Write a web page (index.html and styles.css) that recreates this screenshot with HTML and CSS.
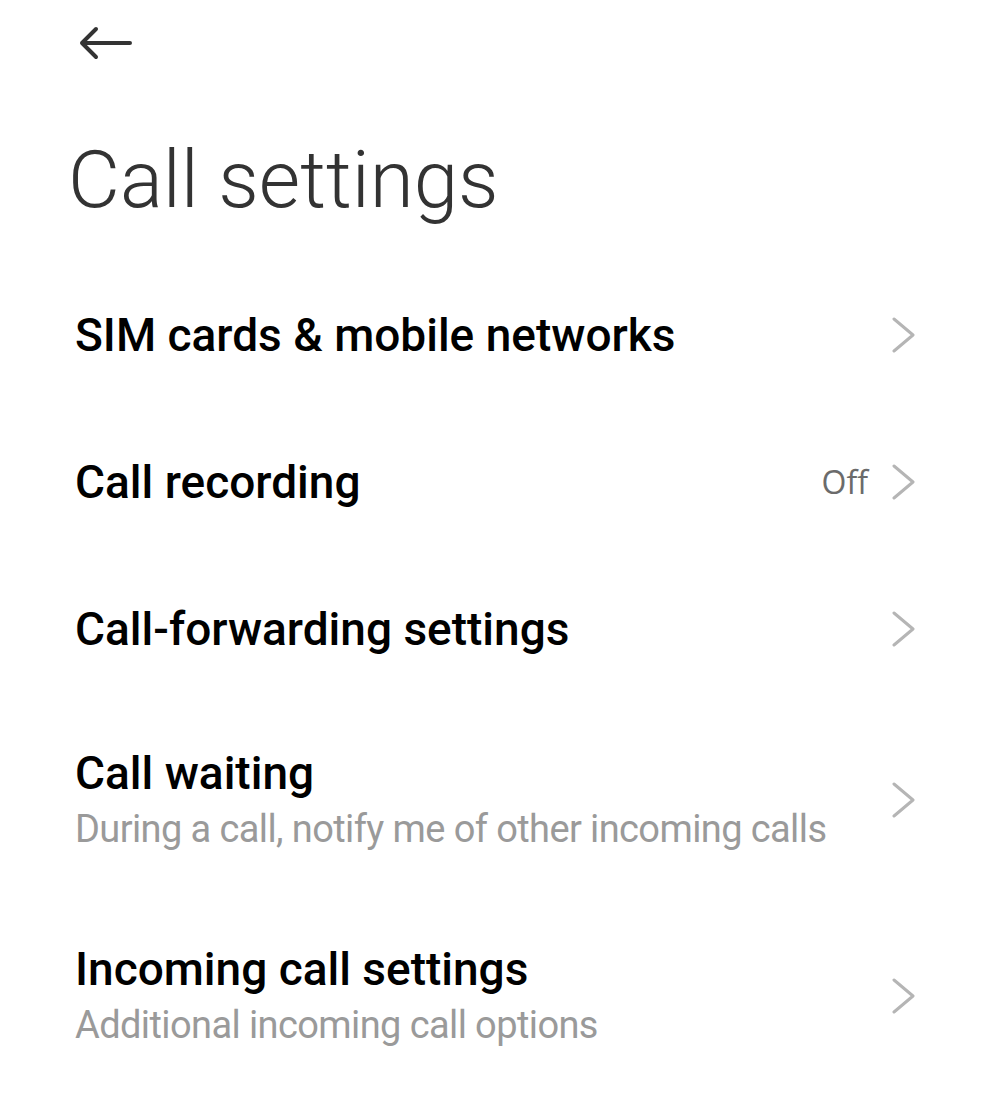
FILE: index.html
```html
<!DOCTYPE html>
<html>
<head>
    <title>Call settings</title>
    <link rel="stylesheet" href="styles.css">
</head>
<body>
    <div class="topbar">
        <button class="back-btn">
            <svg width="56" height="34" viewBox="0 0 56 34">
                <path d="M52 17H4M18 3L4 17l14 14" fill="none" stroke="#333" stroke-width="4" stroke-linecap="round" stroke-linejoin="round"/>
            </svg>
        </button>
    </div>
    <h1 class="page-title">Call settings</h1>

    <div class="settings-list">
        <div class="item">
            <div class="item-text">
                <div class="item-title">SIM cards &amp; mobile networks</div>
            </div>
            <svg class="chevron" width="24" height="36" viewBox="0 0 24 36"><path d="M2 2l19 16L2 34"/></svg>
        </div>
        <div class="item">
            <div class="item-text">
                <div class="item-title">Call recording</div>
            </div>
            <span class="item-value">Off</span>
            <svg class="chevron" width="24" height="36" viewBox="0 0 24 36"><path d="M2 2l19 16L2 34"/></svg>
        </div>
        <div class="item">
            <div class="item-text">
                <div class="item-title">Call-forwarding settings</div>
            </div>
            <svg class="chevron" width="24" height="36" viewBox="0 0 24 36"><path d="M2 2l19 16L2 34"/></svg>
        </div>
        <div class="item two-line">
            <div class="item-text">
                <div class="item-title">Call waiting</div>
                <div class="item-sub">During a call, notify me of other incoming calls</div>
            </div>
            <svg class="chevron" width="24" height="36" viewBox="0 0 24 36"><path d="M2 2l19 16L2 34"/></svg>
        </div>
        <div class="item two-line">
            <div class="item-text">
                <div class="item-title">Incoming call settings</div>
                <div class="item-sub">Additional incoming call options</div>
            </div>
            <svg class="chevron" width="24" height="36" viewBox="0 0 24 36"><path d="M2 2l19 16L2 34"/></svg>
        </div>
    </div>
</body>
</html>
```

FILE: styles.css
```css
body {
    margin: 0;
    background: #fff;
    font-family: Roboto, "Noto Sans", sans-serif;
    color: #000;
}

.topbar {
    height: 86px;
    display: flex;
    align-items: center;
    padding-left: 78px;
}

.back-btn {
    background: none;
    border: none;
    padding: 0;
    display: flex;
    margin-top: -1px;
}

.page-title {
    margin: 0;
    padding-left: 68px;
    font-size: 80px;
    font-weight: 300;
    color: #333;
    line-height: 96px;
    margin-top: 46px;
}

.settings-list {
    margin-top: 33px;
}

.item {
    display: flex;
    align-items: center;
    padding: 0 74px 0 75px;
    height: 147px;
}

.item.two-line {
    height: 196px;
}

.item-text {
    flex: 1;
}

.item-title {
    font-size: 46px;
    font-weight: 500;
    line-height: 56px;
}

.item-sub {
    font-size: 38px;
    letter-spacing: -0.6px;
    color: #9a9a9a;
    line-height: 52px;
    margin-top: 2px;
}

.item-value {
    font-family: "Open Sans", "Noto Sans", sans-serif;
    font-size: 32px;
    color: #6b6b6b;
    margin-right: 24px;
}

.chevron {
    fill: none;
    stroke: #b5b5b5;
    stroke-width: 3;
    stroke-linecap: round;
    stroke-linejoin: round;
}
```
